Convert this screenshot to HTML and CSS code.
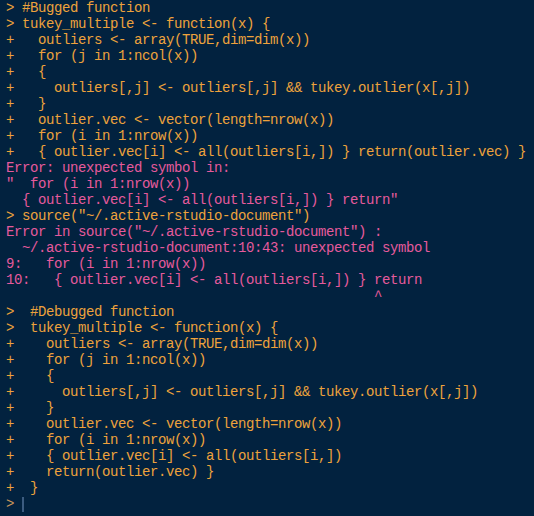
FILE: index.html
```html
<!DOCTYPE html>
<html>
<head>
<meta charset="utf-8">
<link rel="stylesheet" href="styles.css">
</head>
<body>
<div class="console">
<div class="ln in">&gt; #Bugged function</div>
<div class="ln in">&gt; tukey_multiple &lt;- function(x) {</div>
<div class="ln in">+   outliers &lt;- array(TRUE,dim=dim(x))</div>
<div class="ln in">+   for (j in 1:ncol(x))</div>
<div class="ln in">+   {</div>
<div class="ln in">+     outliers[,j] &lt;- outliers[,j] &amp;&amp; tukey.outlier(x[,j])</div>
<div class="ln in">+   }</div>
<div class="ln in">+   outlier.vec &lt;- vector(length=nrow(x))</div>
<div class="ln in">+   for (i in 1:nrow(x))</div>
<div class="ln in">+   { outlier.vec[i] &lt;- all(outliers[i,]) } return(outlier.vec) }</div>
<div class="ln err">Error: unexpected symbol in:</div>
<div class="ln err">"  for (i in 1:nrow(x))</div>
<div class="ln err">  { outlier.vec[i] &lt;- all(outliers[i,]) } return"</div>
<div class="ln in">&gt; source("~/.active-rstudio-document")</div>
<div class="ln err">Error in source("~/.active-rstudio-document") : </div>
<div class="ln err">  ~/.active-rstudio-document:10:43: unexpected symbol</div>
<div class="ln err">9:   for (i in 1:nrow(x))</div>
<div class="ln err">10:   { outlier.vec[i] &lt;- all(outliers[i,]) } return</div>
<div class="ln err">                                              ^</div>
<div class="ln in">&gt;  #Debugged function</div>
<div class="ln in">&gt;  tukey_multiple &lt;- function(x) {</div>
<div class="ln in">+    outliers &lt;- array(TRUE,dim=dim(x))</div>
<div class="ln in">+    for (j in 1:ncol(x))</div>
<div class="ln in">+    {</div>
<div class="ln in">+      outliers[,j] &lt;- outliers[,j] &amp;&amp; tukey.outlier(x[,j])</div>
<div class="ln in">+    }</div>
<div class="ln in">+    outlier.vec &lt;- vector(length=nrow(x))</div>
<div class="ln in">+    for (i in 1:nrow(x))</div>
<div class="ln in">+    { outlier.vec[i] &lt;- all(outliers[i,])</div>
<div class="ln in">+    return(outlier.vec) }</div>
<div class="ln in">+  }</div>
<div class="ln prompt"><span class="dim">&gt; </span><span class="cursor"></span></div>
</div>
</body>
</html>
```
FILE: styles.css
```css
html, body {
  margin: 0;
  padding: 0;
  background: #02223f;
  height: 100%;
  overflow: hidden;
}
.console {
  padding: 0 0 0 6px;
  font-family: "Liberation Mono", "DejaVu Sans Mono", monospace;
  font-size: 14px;
  letter-spacing: -0.4px;
  line-height: 16px;
}
.ln {
  white-space: pre;
  height: 16px;
}
.in {
  color: #eea23c;
}
.err {
  color: #e65a9c;
}
.prompt {
  display: flex;
  align-items: center;
}
.dim {
  color: #c8945a;
  white-space: pre;
}
.cursor {
  display: inline-block;
  width: 2px;
  height: 15px;
  background: #3c5c80;
}
```
